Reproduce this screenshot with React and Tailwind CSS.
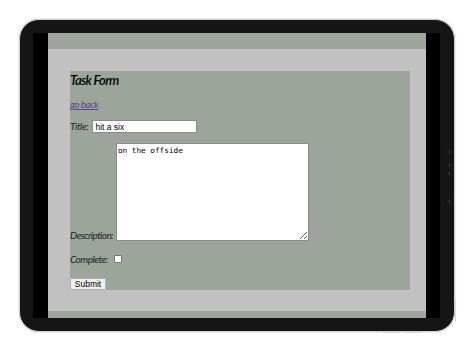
export default function App() {
  const hand = { fontFamily: 'Lato, "Open Sans", sans-serif' };
  const arial = { fontFamily: 'Arial, "Liberation Sans", sans-serif' };
  return (
    <div className="w-[474px] h-[351px] bg-white pt-[19px] pl-[19px]">
      <div className="relative w-[436px] h-[313px] rounded-[20px] bg-[#151515] border border-[#cfcfcf] shadow-[0_0_2px_rgba(0,0,0,0.25)] pt-[13px] pl-[13px] pr-[14px] pb-[13px]">
        <div className="flex h-full">
          <div className="w-[15px] bg-black" />
          <div className="flex-1 flex flex-col">
            <div className="h-[16px] bg-[#9ca69b]" />
            <div className="flex-1 bg-[#c1c1c1] pl-[22px] pr-[16px] pt-[22px] pb-[21px]">
              <div className="h-full bg-[#9ba59a] flex flex-col text-black" style={hand}>
                <h2 className="text-[13px] font-semibold italic leading-[16px] tracking-[-0.7px] mt-[1px]">Task Form</h2>
                <a href="#" className="mt-[10px] text-[10px] italic leading-[12px] tracking-[-0.5px] text-[#5b3f94] underline w-fit">go back</a>
                <div className="mt-[10px] flex items-center h-[13px]">
                  <span className="text-[10px] italic tracking-[-0.4px] text-[#222]">Title:</span>
                  <input
                    defaultValue="hit a six"
                    className="ml-[4px] w-[105px] h-[13px] bg-white border border-[#8a8a8a] px-[2px] text-[8.5px] leading-[11px] outline-none"
                    style={arial}
                  />
                </div>
                <div className="mt-[10px] flex items-end">
                  <span className="text-[10px] italic tracking-[-0.6px] leading-[12px] text-[#222]">Description:</span>
                  <textarea
                    defaultValue="on the offside"
                    className="ml-[3px] w-[193px] h-[98px] bg-white border border-[#8a8a8a] px-[1px] pt-[2px] text-[7.7px] leading-[10px] outline-none"
                    style={{ fontFamily: '"DejaVu Sans Mono", monospace' }}
                  />
                </div>
                <div className="mt-[12px] flex items-center h-[12px]">
                  <span className="text-[10px] italic tracking-[-0.5px] text-[#222]">Complete:</span>
                  <span className="ml-[6px] w-[8px] h-[8px] bg-white border border-[#777] rounded-[1px]" />
                </div>
                <button
                  className="mt-auto w-[36px] h-[12px] bg-[#efefef] border border-[#b0b0b0] text-[8.5px] leading-[10px] text-black"
                  style={arial}
                >
                  Submit
                </button>
              </div>
            </div>
            <div className="h-[7px] bg-[#9ca69b]" />
          </div>
          <div className="w-[14px] bg-black" />
        </div>
        <span className="absolute left-[427px] top-[130px] w-[4px] h-[4px] rounded-full bg-[#262626]" />
        <span className="absolute left-[427px] top-[143px] w-[4px] h-[4px] rounded-full bg-[#262626]" />
        <span className="absolute left-[428px] top-[152px] w-[2px] h-[3px] rounded-full bg-[#333]" />
        <span className="absolute left-[427px] top-[179px] w-[4px] h-[4px] rounded-full bg-[#262626]" />
        <span className="absolute left-[363px] bottom-[-2px] w-[17px] h-[1px] bg-[#d8d8d8]" />
        <span className="absolute left-[384px] bottom-[-2px] w-[17px] h-[1px] bg-[#d8d8d8]" />
        <span className="absolute right-[-2px] top-[280px] w-[1px] h-[22px] bg-[#d8d8d8]" />
      </div>
    </div>
  );
}
